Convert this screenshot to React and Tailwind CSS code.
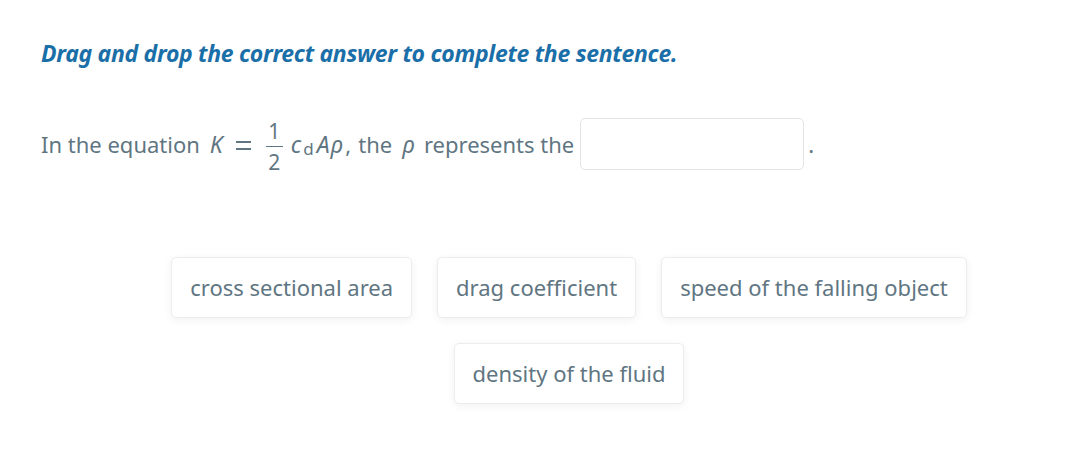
export default function App() {
    const options = ["cross sectional area", "drag coefficient", "speed of the falling object", "density of the fluid"];

    return (
        <div className="min-h-[450px] w-[1075px] bg-white" style={{ fontFamily: '"Noto Sans", "Open Sans", sans-serif' }}>
            <div className="pl-[41px] pt-[38px]">
                <h2 className="text-[23px] font-bold italic text-[#1b6fa8] leading-[30px] tracking-[-0.3px]">
                    Drag and drop the correct answer to complete the sentence.
                </h2>

                {/* Sentence */}
                <div className="mt-[49px] flex items-center text-[22px] text-[#5f7682] h-[54px]">
                    <span>In the equation</span>
                    <span className="ml-[10px] italic text-[23px]">K</span>
                    <span className="ml-[13px] flex flex-col gap-[5px] pt-[2px]">
                        <span className="block w-[15px] h-[2px] bg-[#5f7682]"></span>
                        <span className="block w-[15px] h-[2px] bg-[#5f7682]"></span>
                    </span>
                    <span className="ml-[15px] flex flex-col items-center text-[21px] leading-[20px] pt-[4px]">
                        <span>1</span>
                        <span className="w-[17px] h-px bg-[#5f7682] my-[5px]"></span>
                        <span>2</span>
                    </span>
                    <span className="ml-[8px] italic text-[23px]">c</span>
                    <span className="text-[17px] self-end mb-[10px] ml-[2px]">d</span>
                    <span className="ml-[3px] italic text-[23px]">A</span>
                    <span className="ml-[1px] italic text-[23px]">ρ</span>
                    <span className="ml-[2px]">,</span>
                    <span className="ml-[7px]">the</span>
                    <span className="ml-[10px] italic text-[23px]">ρ</span>
                    <span className="ml-[9px]">represents the</span>
                    <span className="ml-[6px] w-[224px] h-[52px] rounded-[5px] border border-[#e3e3e3] bg-white"></span>
                    <span className="ml-[4px]">.</span>
                </div>

                {/* Options */}
                <div className="mt-[86px] ml-[98px] flex flex-wrap justify-center gap-x-[25px] gap-y-[25px] w-[860px]">
                    {options.map((opt) => (
                        <div
                            key={opt}
                            className="h-[61px] px-[18px] flex items-center rounded-[5px] border border-[#ececec] bg-white text-[22px] text-[#5f7682] shadow-[0_2px_8px_rgba(0,0,0,0.06)]"
                        >
                            {opt}
                        </div>
                    ))}
                </div>
            </div>
        </div>
    );
}
